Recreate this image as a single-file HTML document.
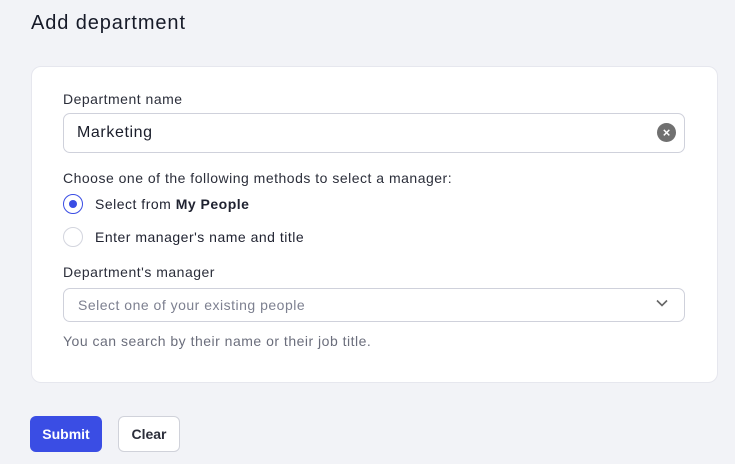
<!DOCTYPE html>
<html><head><style>
*{box-sizing:border-box;margin:0;padding:0}
body{width:735px;height:464px;background:#f2f3f7;font-family:"Liberation Sans",sans-serif;color:#1f2230;position:relative;overflow:hidden;letter-spacing:0.5px}
.abs{position:absolute}
h1{position:absolute;left:31px;top:12px;font-size:20px;font-weight:normal;color:#161a28;letter-spacing:0.9px}
.card{left:31px;top:66px;width:687px;height:317px;background:#fff;border:1px solid #e6e7ee;border-radius:10px}
.lbl{font-size:14px;color:#2b2e3a}
.inp{border:1px solid #cfd1db;border-radius:7px;background:#fff}
.radio{width:20px;height:20px;border-radius:50%;border:1.5px solid #d3d5de}
</style></head><body>
<h1>Add department</h1>
<div class="abs card"></div>
<div class="abs lbl" style="left:63px;top:91px">Department name</div>
<div class="abs inp" style="left:63px;top:113px;width:622px;height:40px"></div>
<div class="abs" style="left:77px;top:124px;font-size:16px;color:#1a1d2a;letter-spacing:0.6px">Marketing</div>
<div class="abs" style="left:657px;top:123px;width:19px;height:19px;border-radius:50%;background:#707070;color:#fff;font-size:13px;font-weight:bold;text-align:center;line-height:19px;letter-spacing:0">×</div>
<div class="abs lbl" style="left:63px;top:170px">Choose one of the following methods to select a manager:</div>
<div class="abs radio" style="left:63px;top:194px;border-color:#3a4de4"><div style="width:8px;height:8px;border-radius:50%;background:#3a4de4;margin:4.5px"></div></div>
<div class="abs lbl" style="left:95px;top:196px;color:#1f2230">Select from <b>My People</b></div>
<div class="abs radio" style="left:63px;top:227px"></div>
<div class="abs lbl" style="left:95px;top:229px;color:#1f2230">Enter manager's name and title</div>
<div class="abs lbl" style="left:63px;top:264px">Department's manager</div>
<div class="abs inp" style="left:63px;top:288px;width:622px;height:34px"></div>
<div class="abs" style="left:78px;top:297px;font-size:14px;color:#7d8090">Select one of your existing people</div>
<svg class="abs" style="left:655px;top:298px" width="14" height="10" viewBox="0 0 14 10"><path d="M2 2.5L7 7.5L12 2.5" fill="none" stroke="#666" stroke-width="1.6"/></svg>
<div class="abs" style="left:63px;top:333px;font-size:14px;color:#6b6e7c">You can search by their name or their job title.</div>
<div class="abs" style="left:30px;top:416px;width:72px;height:36px;background:#3a4de4;border-radius:6px;color:#fff;font-weight:bold;font-size:14px;text-align:center;line-height:36px;letter-spacing:0">Submit</div>
<div class="abs" style="left:118px;top:416px;width:62px;height:36px;background:#fff;border:1px solid #d0d2da;border-radius:6px;color:#2b2e3a;font-weight:bold;font-size:14px;text-align:center;line-height:34px;letter-spacing:0">Clear</div>
</body></html>
